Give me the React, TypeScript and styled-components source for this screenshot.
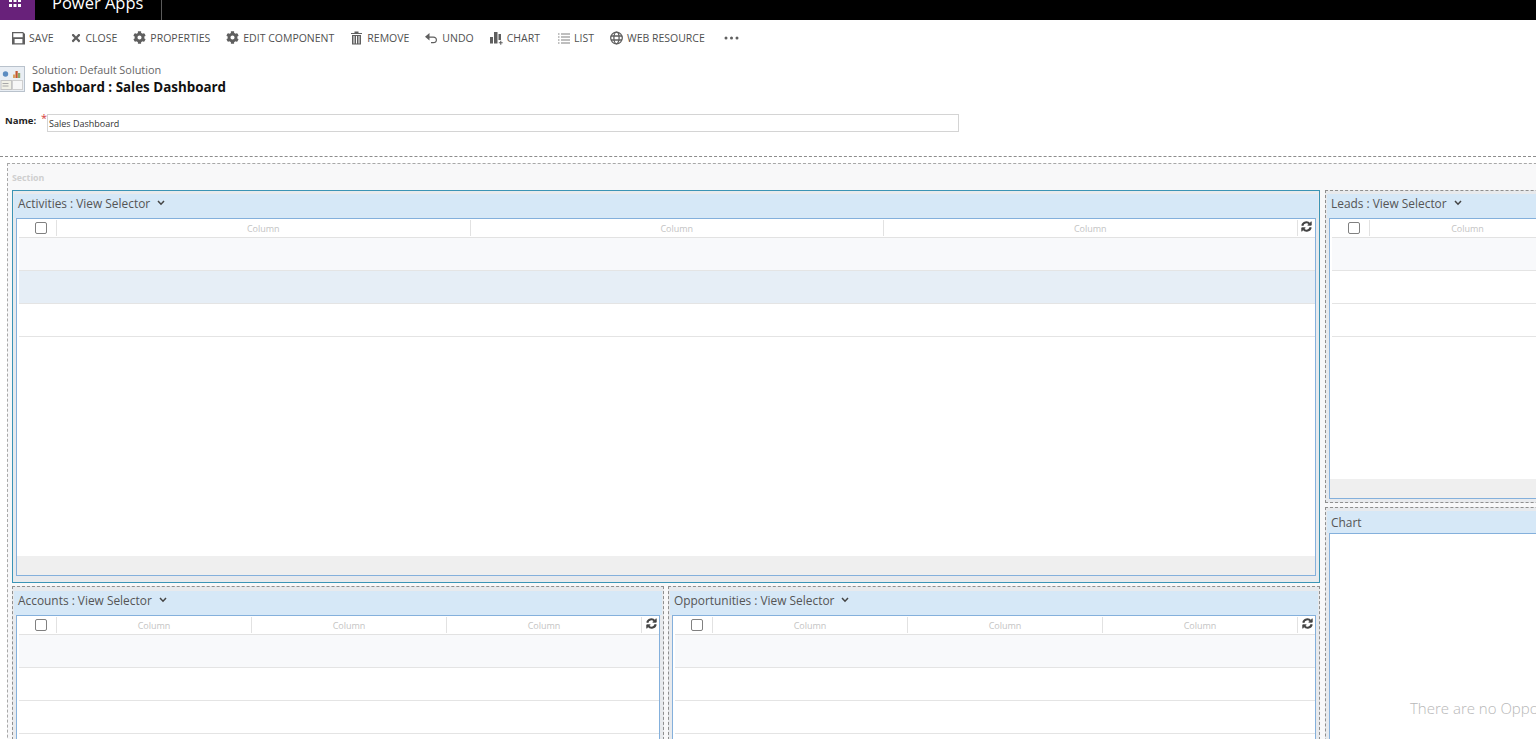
import React from 'react'
import styled, { createGlobalStyle } from 'styled-components'
import { FaCog, FaTimes } from 'react-icons/fa'

const Global = createGlobalStyle`
  html, body {
    margin: 0;
    height: 100%;
    overflow: hidden;
    background: #fff;
    font-family: "Open Sans", "Noto Sans", "Liberation Sans", sans-serif;
  }
`

const Page = styled.div`
  width: 1536px;
  height: 739px;
  overflow: hidden;
`

const TopBar = styled.div`
  display: flex;
  height: 20px;
  background: #000;
  overflow: hidden;
`

const AppLauncher = styled.div`
  width: 35px;
  background: #68217a;
  display: flex;
  justify-content: center;
  padding-right: 6px;
  box-sizing: border-box;
`

const BrandCell = styled.div`
  width: 127px;
  padding-left: 17px;
  box-sizing: border-box;
  border-right: 1px solid #5a5a5a;
  color: #fff;
  font-size: 16.5px;
  line-height: 20px;
  margin-top: -7px;
  height: 27px;
`

const Toolbar = styled.div`
  display: flex;
  align-items: center;
  gap: 16px;
  height: 35px;
  padding-left: 12px;
`

const ToolButton = styled.div`
  display: flex;
  align-items: center;
  gap: 4px;
  color: #505050;
  font-size: 10.5px;
  white-space: nowrap;
  svg {
    flex: none;
    color: #5f5f5f;
  }
`

const MoreDots = styled.svg`
  margin-left: 3px;
`

const TitleBlock = styled.div`
  display: flex;
  gap: 7px;
  margin-top: 8px;
  height: 40px;
`

const EntityIcon = styled.svg`
  margin-top: 3px;
`

const TitleText = styled.div`
  display: flex;
  flex-direction: column;
`

const SolutionName = styled.div`
  color: #666;
  font-size: 10.9px;
  line-height: 13px;
`

const DashboardName = styled.div`
  color: #111;
  font-size: 13.4px;
  font-weight: 700;
  line-height: 23px;
`

const NameRow = styled.div`
  display: flex;
  align-items: flex-start;
  margin-top: 11px;
  padding-left: 5px;
  height: 24px;
`

const NameLabel = styled.label`
  color: #222;
  font-size: 9.5px;
  font-weight: 700;
  width: 36px;
  line-height: 14px;
`

const RequiredMark = styled.span`
  color: #d43a3a;
  font-size: 11px;
  width: 6px;
  line-height: 8px;
`

const NameInput = styled.div`
  width: 912px;
  height: 18px;
  box-sizing: border-box;
  border: 1px solid #d4d4d4;
  padding-left: 1px;
  color: #333;
  font-size: 9px;
  line-height: 17px;
`

const Canvas = styled.div`
  margin-top: 18px;
  border-top: 1px dashed #8c8c8c;
  padding: 6px 0 0 7px;
`

const Section = styled.div`
  width: 1640px;
  height: 700px;
  border: 1px dashed #a8a8a8;
  background: #f8f8f9;
  padding: 0 4px;
  box-sizing: border-box;
`

const SectionLabel = styled.div`
  color: #cfcfcf;
  font-size: 8.8px;
  font-weight: 700;
  height: 26px;
  line-height: 28px;
`

const Columns = styled.div`
  display: grid;
  grid-template-columns: 1308px 1fr;
  gap: 5px;
`

const Stack = styled.div<{ $gap: number }>`
  display: flex;
  flex-direction: column;
  gap: ${p => p.$gap}px;
`

const BottomRow = styled.div`
  display: grid;
  grid-template-columns: 652px 652px;
  gap: 4px;
`

const Frame = styled.div<{
  $height: number
  $selected?: boolean
  $top: number
  $bottom?: number
}>`
  height: ${p => p.$height}px;
  box-sizing: border-box;
  border: 1px ${p => (p.$selected ? 'solid #3b94b5' : 'dashed #8f8f8f')};
  background: #e8eaed;
  padding: ${p => p.$top}px 3px ${p => p.$bottom ?? 6}px 1px;
  display: flex;
  flex-direction: column;
`

const FrameHeader = styled.div`
  flex: none;
  display: flex;
  align-items: center;
  gap: 7px;
  height: 24px;
  box-sizing: border-box;
  margin-right: -2px;
  padding: 0 0 6px 4px;
  background: #d6e8f7;
  color: #555;
  font-size: 11.9px;
  white-space: nowrap;
`

const ChartHeader = styled(FrameHeader)`
  height: 22px;
  padding-bottom: 0;
`

const GridBody = styled.div`
  flex: 1;
  display: flex;
  flex-direction: column;
  margin-left: 2px;
  background: #fff;
  border: 1px solid #84b0dc;
  min-height: 0;
  overflow: hidden;
`

const HeaderRow = styled.div`
  flex: none;
  display: flex;
  align-items: stretch;
  height: 18px;
  margin-left: 2px;
  border-bottom: 1px solid #e2e2e2;
`

const CheckCell = styled.div`
  flex: none;
  width: 38px;
  margin: 1px 0;
  border-right: 1px solid #e2e2e2;
  display: flex;
  align-items: center;
  justify-content: center;
  padding-left: 7px;
  box-sizing: border-box;
`

const CheckBox = styled.div`
  width: 12px;
  height: 12px;
  box-sizing: border-box;
  border: 1px solid #808080;
  border-radius: 2px;
  background: #fff;
`

const ColumnCell = styled.div<{ $width: number }>`
  flex: none;
  width: ${p => p.$width}px;
  margin: 1px 0;
  box-sizing: border-box;
  border-right: 1px solid #e2e2e2;
  display: flex;
  align-items: center;
  justify-content: center;
  color: #c4c4c4;
  font-size: 9px;
`

const RefreshCell = styled.div`
  flex: 1;
  display: flex;
  justify-content: center;
  padding: 2px 0 0 1px;
  color: #444;
`

const DataRow = styled.div<{ $tone?: 'soft' | 'active' }>`
  flex: none;
  height: 32px;
  margin-left: 2px;
  border-bottom: 1px solid #e4e4e4;
  background: ${p =>
    p.$tone === 'soft' ? '#f8f9fb' : p.$tone === 'active' ? '#e6eef6' : '#fff'};
`

const GridSpacer = styled.div`
  flex: 1;
`

const GridFooter = styled.div`
  flex: none;
  height: 19px;
  background: #efefef;
`

const ChartBody = styled.div`
  flex: 1;
  margin-left: 2px;
  background: #fff;
  border: 1px solid #84b0dc;
  padding: 164px 0 0 80px;
  color: #b8b8b8;
  font-size: 15px;
  font-weight: 300;
  white-space: nowrap;
`

function Icon({ children, w = 14 }: { children: React.ReactNode; w?: number }) {
  return (
    <svg width={w} height="14" viewBox={`0 0 ${w} 14`} fill="currentColor">
      {children}
    </svg>
  )
}

const tools: { label: string; icon: React.ReactNode }[] = [
  {
    label: 'SAVE',
    icon: (
      <Icon w={13}>
        <path d="M0 1h11l2 2v10.500H0zM1.300 2.300v3.900h9.400V2.300zM2.600 8v4.300h7.800V8z" fillRule="evenodd" />
      </Icon>
    ),
  },
  { label: 'CLOSE', icon: <FaTimes size={12} /> },
  { label: 'PROPERTIES', icon: <FaCog size={13} /> },
  { label: 'EDIT COMPONENT', icon: <FaCog size={13} /> },
  {
    label: 'REMOVE',
    icon: (
      <Icon w={13}>
        <path d="M1 2h11v1H1zM4.500 0.500h4V2h-4zM2 4h9v9.500H2zM3.500 5v7.500h1V5zM6 5v7.500h1V5zM8.500 5v7.500h1V5z" fillRule="evenodd" />
      </Icon>
    ),
  },
  {
    label: 'UNDO',
    icon: (
      <Icon w={13}>
        <path d="M4.500 2L0 5.700l4.500 3.700V6.800h3.800c1.600 0 2.500.8 2.500 2.100S9.900 11 8.300 11H6v1.200h2.300c2.300 0 3.700-1.300 3.700-3.300s-1.400-3.300-3.700-3.300H4.500z" />
      </Icon>
    ),
  },
  {
    label: 'CHART',
    icon: (
      <Icon w={13}>
        <path d="M0 6h3v6.500H0zM4 1h3.500v11.500H4zM8.500 3H11v6H8.500zM10.200 9.800h1.100v1.400h1.400v1.100h-1.400v1.400h-1.100v-1.400H8.800v-1.100h1.400z" />
      </Icon>
    ),
  },
  {
    label: 'LIST',
    icon: (
      <Icon w={14}>
        <path d="M2 2.500h1.500v1H2zM5 2.500h9v1H5zM2 5.500h1.500v1H2zM5 5.500h9v1H5zM2 8.500h1.500v1H2zM5 8.500h9v1H5zM2 11.500h1.500v1H2zM5 11.500h9v1H5z" opacity=".8" />
      </Icon>
    ),
  },
  {
    label: 'WEB RESOURCE',
    icon: (
      <Icon w={13}>
        <g fill="none" stroke="currentColor" strokeWidth="1.300">
          <circle cx="6.500" cy="7" r="5.800" />
          <ellipse cx="6.500" cy="7" rx="2.600" ry="5.800" />
          <path d="M1 5h11M1 9h11" />
        </g>
      </Icon>
    ),
  },
]

function DashboardIcon() {
  return (
    <EntityIcon width="25" height="26" viewBox="0 0 25 26">
      <rect x="-1" y="0.500" width="25.500" height="25" fill="#e9eef4" stroke="#b9c2cc" />
      <circle cx="5.500" cy="8" r="2.700" fill="#5c8cc0" />
      <rect x="13" y="8.500" width="2.200" height="3.500" fill="#d8a15f" />
      <rect x="15.500" y="5" width="2.200" height="7" fill="#c4552d" />
      <rect x="18" y="7" width="2.200" height="5" fill="#8aa76a" />
      <rect x="1" y="14.500" width="10.500" height="9" fill="#f1f1e6" stroke="#c4c4c4" />
      <path d="M2.500 17.500h6M2.500 20h6" stroke="#a8a8a8" />
      <rect x="12.500" y="14.500" width="10" height="9" fill="#f7f7f7" stroke="#cfcfcf" />
    </EntityIcon>
  )
}

function RefreshIcon() {
  return (
    <svg width="11" height="11" viewBox="0 0 10 10" fill="none" stroke="currentColor" strokeWidth="1.900">
      <path d="M1.200 4.300A3.700 3.700 0 0 1 7.800 2.700" />
      <path d="M8.800 5.700A3.700 3.700 0 0 1 2.200 7.300" />
      <path d="M9.300 0.500v3.300H6M0.700 9.500V6.200H4" fill="currentColor" strokeWidth="0.800" />
    </svg>
  )
}

function Chevron() {
  return (
    <svg width="8" height="6" viewBox="0 0 8 6" fill="none" stroke="#444" strokeWidth="1.500">
      <path d="M1 1l3 3.200L7 1" />
    </svg>
  )
}

function ListCard(props: {
  title: string
  height: number
  top: number
  bottom?: number
  columnWidth: number
  tones: ('soft' | 'active' | undefined)[]
  selected?: boolean
  footer?: boolean
}) {
  return (
    <Frame
      $height={props.height}
      $selected={props.selected}
      $top={props.top}
      $bottom={props.bottom}
    >
      <FrameHeader>
        {props.title}
        <Chevron />
      </FrameHeader>
      <GridBody>
        <HeaderRow>
          <CheckCell>
            <CheckBox />
          </CheckCell>
          {[0, 1, 2].map(i => (
            <ColumnCell key={i} $width={props.columnWidth}>
              Column
            </ColumnCell>
          ))}
          <RefreshCell>
            <RefreshIcon />
          </RefreshCell>
        </HeaderRow>
        {props.tones.map((tone, i) => (
          <DataRow key={i} $tone={tone} />
        ))}
        <GridSpacer />
        {props.footer && <GridFooter />}
      </GridBody>
    </Frame>
  )
}

export default function App() {
  return (
    <Page>
      <Global />
      <TopBar>
        <AppLauncher>
          <svg width="12" height="20" viewBox="0 0 12 20" fill="#fff">
            <path d="M0 0h3v2H0zM4.500 0h3v2h-3zM9 0h3v2H9zM0 4h3v3H0zM4.500 4h3v3h-3zM9 4h3v3H9z" />
          </svg>
        </AppLauncher>
        <BrandCell>Power Apps</BrandCell>
      </TopBar>

      <Toolbar>
        {tools.map(t => (
          <ToolButton key={t.label}>
            {t.icon}
            {t.label}
          </ToolButton>
        ))}
        <ToolButton>
          <MoreDots width="15" height="4" viewBox="0 0 15 4" fill="currentColor">
            <circle cx="2" cy="2" r="1.500" />
            <circle cx="7.500" cy="2" r="1.500" />
            <circle cx="13" cy="2" r="1.500" />
          </MoreDots>
        </ToolButton>
      </Toolbar>

      <TitleBlock>
        <DashboardIcon />
        <TitleText>
          <SolutionName>Solution: Default Solution</SolutionName>
          <DashboardName>Dashboard : Sales Dashboard</DashboardName>
        </TitleText>
      </TitleBlock>

      <NameRow>
        <NameLabel>Name:</NameLabel>
        <RequiredMark>*</RequiredMark>
        <NameInput>Sales Dashboard</NameInput>
      </NameRow>

      <Canvas>
        <Section>
          <SectionLabel>Section</SectionLabel>
          <Columns>
            <Stack $gap={3}>
              <ListCard
                title="Activities : View Selector"
                height={393}
                top={3}
                columnWidth={413.5}
                tones={['soft', 'active', undefined]}
                selected
                footer
              />
              <BottomRow>
                <ListCard
                  title="Accounts : View Selector"
                  height={300}
                  top={4}
                  columnWidth={195}
                  tones={['soft', undefined, undefined, undefined]}
                />
                <ListCard
                  title="Opportunities : View Selector"
                  height={300}
                  top={4}
                  columnWidth={195}
                  tones={['soft', undefined, undefined, undefined]}
                />
              </BottomRow>
            </Stack>
            <Stack $gap={4}>
              <ListCard
                title="Leads : View Selector"
                height={313}
                top={3}
                bottom={3}
                columnWidth={196}
                tones={['soft', undefined, undefined]}
                footer
              />
              <Frame $height={300} $top={3}>
                <ChartHeader>Chart</ChartHeader>
                <ChartBody>There are no Opportunities in this view</ChartBody>
              </Frame>
            </Stack>
          </Columns>
        </Section>
      </Canvas>
    </Page>
  )
}
